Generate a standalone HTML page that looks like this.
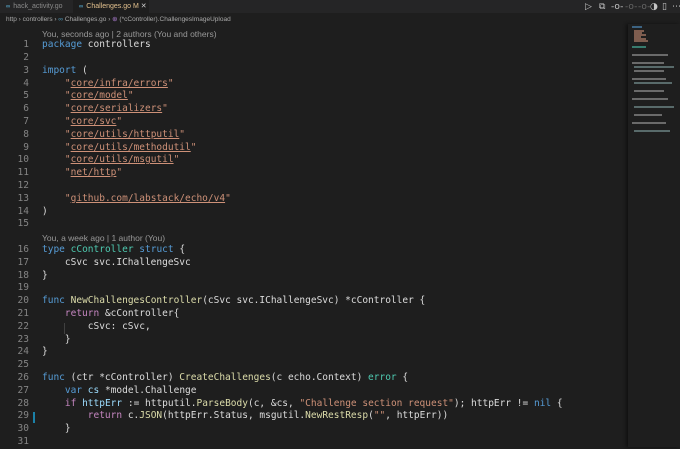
<!DOCTYPE html>
<html><head><meta charset="utf-8"><style>
*{margin:0;padding:0;box-sizing:border-box}
body{width:680px;height:447px;background:#1e1e1e;overflow:hidden;position:relative;font-family:"DejaVu Sans Mono","Liberation Mono",monospace;}
.tabs{position:absolute;left:0;top:0;width:680px;height:13px;background:#252526;font-family:"Liberation Sans",sans-serif;font-size:7px;}
.tab{position:absolute;top:0;height:13px;line-height:13px;color:#8a8a8a;padding-left:6px;white-space:nowrap;overflow:hidden}
.tab.a{background:#1e1e1e;color:#e2c08d}
.go{color:#519aba;font-weight:bold;font-size:6px;margin-right:3px}
.bc{position:absolute;left:6px;top:15px;font-family:"Liberation Sans",sans-serif;font-size:6.5px;color:#a9a9a9;line-height:10px;white-space:nowrap}
.lens{position:absolute;left:42px;font-family:"Liberation Sans",sans-serif;font-size:8.5px;color:#999;height:12px;line-height:12px}
.r{position:absolute;left:0;height:12.8px;line-height:12.8px;font-size:9.5px;white-space:pre;color:#dcdcdc}
.n{position:absolute;left:0;width:29px;text-align:right;color:#858585}
.c{position:absolute;left:42px}
.k{color:#569cd6}.p{color:#c586c0}.s{color:#ce9178}.u{text-decoration:underline}.f{color:#dcdcaa}.t{color:#4ec9b0}.v{color:#9cdcfe}
.mini{position:absolute;left:628px;top:24px;width:52px;height:423px;background:#1e1e1e;box-shadow:-2px 0 3px #111}
.ml{position:absolute;height:1.5px;opacity:.55}
.ic{position:absolute;top:2px;color:#c5c5c5;font-size:9px;font-family:"DejaVu Sans",sans-serif}
.w{position:absolute;left:0;top:1.5px;width:680px;height:447px}
</style></head><body>
<div class="tabs">
<div class="tab" style="left:0;width:73px"><span class="go">∞</span>hack_activity.go</div>
<div class="tab a" style="left:73px;width:76px"><span class="go">∞</span>Challenges.go M <span style="color:#ccc">✕</span></div>
<span class="ic" style="left:585px">▷</span><span class="ic" style="left:599px">⧉</span><span class="ic" style="left:611px">-o-</span><span class="ic" style="left:625px;color:#666">-o-</span><span class="ic" style="left:638px;color:#666">-o-</span><span class="ic" style="left:650px">◑</span><span class="ic" style="left:662px">▯</span><span class="ic" style="left:672px">⋯</span>
</div>
<div class="bc">http › controllers › <span style="color:#519aba">∞</span> Challenges.go › <span style="color:#b180d7">⊛</span> (*cController).ChallengesImageUpload</div>
<div class="w">
<div class="lens" style="top:26px">You, seconds ago | 2 authors (You and others)</div>
<div class="lens" style="top:230px">You, a week ago | 1 author (You)</div>

<div class="r" style="top:37.6px"><span class="n">1</span><span class="c"><span class="k">package</span> controllers</span></div>
<div class="r" style="top:50.4px"><span class="n">2</span></div>
<div class="r" style="top:63.2px"><span class="n">3</span><span class="c"><span class="k">import</span> (</span></div>
<div class="r" style="top:76px"><span class="n">4</span><span class="c">    <span class="s">"<span class="u">core/infra/errors</span>"</span></span></div>
<div class="r" style="top:88.8px"><span class="n">5</span><span class="c">    <span class="s">"<span class="u">core/model</span>"</span></span></div>
<div class="r" style="top:101.6px"><span class="n">6</span><span class="c">    <span class="s">"<span class="u">core/serializers</span>"</span></span></div>
<div class="r" style="top:114.4px"><span class="n">7</span><span class="c">    <span class="s">"<span class="u">core/svc</span>"</span></span></div>
<div class="r" style="top:127.2px"><span class="n">8</span><span class="c">    <span class="s">"<span class="u">core/utils/httputil</span>"</span></span></div>
<div class="r" style="top:140px"><span class="n">9</span><span class="c">    <span class="s">"<span class="u">core/utils/methodutil</span>"</span></span></div>
<div class="r" style="top:152.8px"><span class="n">10</span><span class="c">    <span class="s">"<span class="u">core/utils/msgutil</span>"</span></span></div>
<div class="r" style="top:165.6px"><span class="n">11</span><span class="c">    <span class="s">"<span class="u">net/http</span>"</span></span></div>
<div class="r" style="top:178.4px"><span class="n">12</span></div>
<div class="r" style="top:191.2px"><span class="n">13</span><span class="c">    <span class="s">"<span class="u">github.com/labstack/echo/v4</span>"</span></span></div>
<div class="r" style="top:204px"><span class="n">14</span><span class="c">)</span></div>
<div class="r" style="top:216.8px"><span class="n">15</span></div>
<div class="r" style="top:242.4px"><span class="n">16</span><span class="c"><span class="k">type</span> <span class="t">cController</span> <span class="k">struct</span> {</span></div>
<div class="r" style="top:255.2px"><span class="n">17</span><span class="c">    cSvc svc.IChallengeSvc</span></div>
<div class="r" style="top:268px"><span class="n">18</span><span class="c">}</span></div>
<div class="r" style="top:280.8px"><span class="n">19</span></div>
<div class="r" style="top:293.6px"><span class="n">20</span><span class="c"><span class="k">func</span> <span class="f">NewChallengesController</span>(cSvc svc.IChallengeSvc) *cController {</span></div>
<div class="r" style="top:306.4px"><span class="n">21</span><span class="c">    <span class="p">return</span> &amp;cController{</span></div>
<div class="r" style="top:319.2px"><span class="n">22</span><span class="c">        cSvc: cSvc,</span></div>
<div class="r" style="top:332px"><span class="n">23</span><span class="c">    }</span></div>
<div class="r" style="top:344.8px"><span class="n">24</span><span class="c">}</span></div>
<div class="r" style="top:357.6px"><span class="n">25</span></div>
<div class="r" style="top:370.4px"><span class="n">26</span><span class="c"><span class="k">func</span> (ctr *cController) <span class="f">CreateChallenges</span>(c echo.Context) <span class="t">error</span> {</span></div>
<div class="r" style="top:383.2px"><span class="n">27</span><span class="c">    <span class="k">var</span> <span class="v">cs</span> *model.Challenge</span></div>
<div class="r" style="top:396px"><span class="n">28</span><span class="c">    <span class="p">if</span> <span class="v">httpErr</span> := httputil.<span class="f">ParseBody</span>(c, &amp;cs, <span class="s">"Challenge section request"</span>); httpErr != <span class="k">nil</span> {</span></div>
<div class="r" style="top:408.8px"><span class="n">29</span><span class="c">        <span class="p">return</span> c.<span class="f">JSON</span>(httpErr.Status, msgutil.<span class="f">NewRestResp</span>(<span class="s">""</span>, httpErr))</span></div>
<div class="r" style="top:421.6px"><span class="n">30</span><span class="c">    }</span></div>
<div class="r" style="top:434.4px"><span class="n">31</span></div>
<div style="position:absolute;left:33px;top:410px;width:2px;height:11px;background:#1b81a8"></div>
<div style="position:absolute;left:64px;top:321px;width:1px;height:11px;background:#404040"></div>
</div>

<div class="mini">
<div class="ml" style="left:4px;top:2px;width:10px;background:#569cd6"></div>
<div class="ml" style="left:6px;top:6px;width:10px;background:#ce9178"></div>
<div class="ml" style="left:6px;top:8px;width:8px;background:#ce9178"></div>
<div class="ml" style="left:6px;top:10px;width:12px;background:#ce9178"></div>
<div class="ml" style="left:6px;top:12px;width:7px;background:#ce9178"></div>
<div class="ml" style="left:6px;top:14px;width:12px;background:#ce9178"></div>
<div class="ml" style="left:6px;top:16px;width:14px;background:#ce9178"></div>
<div class="ml" style="left:4px;top:22px;width:14px;background:#4ec9b0"></div>
<div class="ml" style="left:4px;top:30px;width:36px;background:#aaa"></div>
<div class="ml" style="left:4px;top:38px;width:32px;background:#aaa"></div>
<div class="ml" style="left:6px;top:42px;width:40px;background:#8aa"></div>
<div class="ml" style="left:6px;top:46px;width:30px;background:#aaa"></div>
<div class="ml" style="left:4px;top:54px;width:34px;background:#aaa"></div>
<div class="ml" style="left:6px;top:58px;width:38px;background:#8aa"></div>
<div class="ml" style="left:6px;top:66px;width:30px;background:#aaa"></div>
<div class="ml" style="left:4px;top:74px;width:36px;background:#aaa"></div>
<div class="ml" style="left:6px;top:82px;width:40px;background:#8aa"></div>
<div class="ml" style="left:6px;top:90px;width:28px;background:#aaa"></div>
<div class="ml" style="left:4px;top:98px;width:34px;background:#aaa"></div>
<div class="ml" style="left:6px;top:106px;width:36px;background:#8aa"></div>
</div>
</body></html>
